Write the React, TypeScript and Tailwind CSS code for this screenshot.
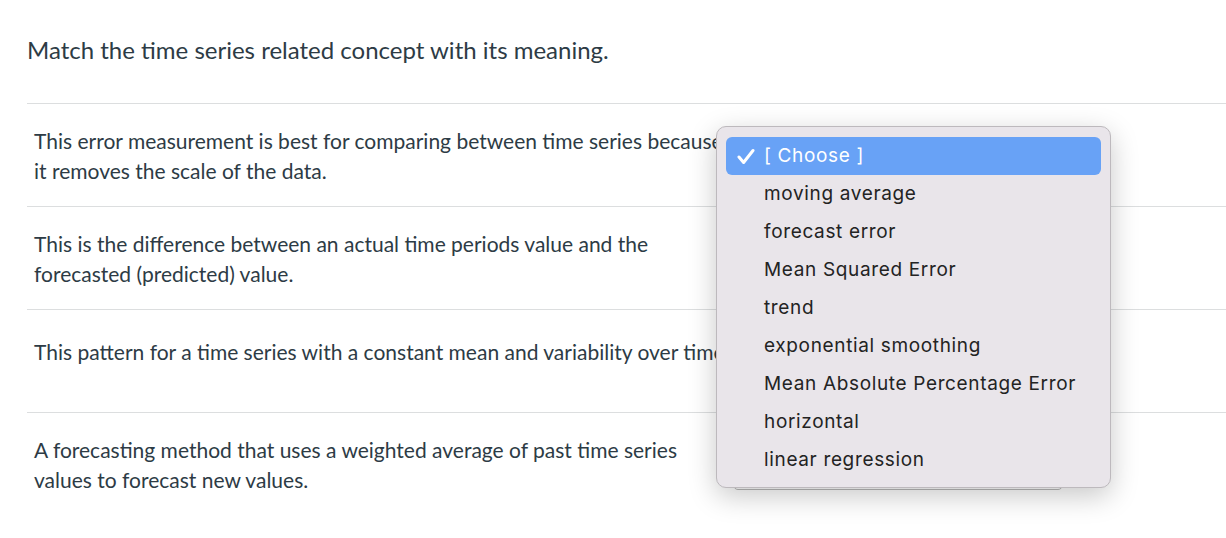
import React from "react";

const rows = [
  { t: "This error measurement is best for comparing between time series because it removes the scale of the data.", c: "pt-[2px]" },
  { t: "This is the difference between an actual time periods value and the forecasted (predicted) value.", c: "pt-[2px]" },
  { t: "This pattern for a time series with a constant mean and variability over time.", c: "pb-[18px]" },
  { t: "A forecasting method that uses a weighted average of past time series values to forecast new values.", c: "pt-[2px]" },
];

const options = [
  "[ Choose ]",
  "moving average",
  "forecast error",
  "Mean Squared Error",
  "trend",
  "exponential smoothing",
  "Mean Absolute Percentage Error",
  "horizontal",
  "linear regression",
];

export default function App() {
  return (
    <div
      className="relative w-[1226px] h-[538px] overflow-hidden bg-white text-[#2d3b45]"
      style={{ fontFamily: "Lato, 'Open Sans', sans-serif" }}
    >
      <div className="pl-[27px] pt-[35px] h-[103px] text-[24px] leading-[30px]">
        Match the time series related concept with its meaning.
      </div>
      <div className="ml-[27px]">
        {rows.map((r, i) => (
          <div
            key={i}
            className="flex items-center h-[103px] border-t border-[#dcdedf]"
          >
            <div className={`pl-[7px] w-[710px] text-[21px] leading-[30px] shrink-0 ${r.c}`}>{r.t}</div>
            <div className="-ml-[4px] w-[330px] h-[48px] mt-[4px] rounded-[5px] border border-[#b9b9b9] bg-white shrink-0" />
          </div>
        ))}
      </div>

      <div
        className="absolute left-[716px] top-[126px] w-[395px] h-[362px] rounded-[10px] border border-[#bdb9bd] bg-[#e9e5ea] px-[9px] pt-[10px] pb-[8px] shadow-[0_8px_28px_rgba(0,0,0,0.22)]"
        style={{ fontFamily: "Inter, 'Noto Sans', sans-serif" }}
      >
        {options.map((o, i) => (
          <div
            key={i}
            className={`flex items-center h-[38px] rounded-[6px] text-[19px] tracking-[0.65px] ${
              i === 0 ? "bg-[#68a2f6] text-white" : "text-[#232323]"
            }`}
          >
            <div className="w-[38px] flex justify-center pl-[2px] shrink-0">
              {i === 0 && (
                <svg width="18" height="17" viewBox="0 0 18 17">
                  <path
                    d="M2 9 L6.6 14.5 L16 2.5"
                    fill="none"
                    stroke="white"
                    strokeWidth="3"
                    strokeLinecap="round"
                    strokeLinejoin="round"
                  />
                </svg>
              )}
            </div>
            <span>{o}</span>
          </div>
        ))}
      </div>
    </div>
  );
}
